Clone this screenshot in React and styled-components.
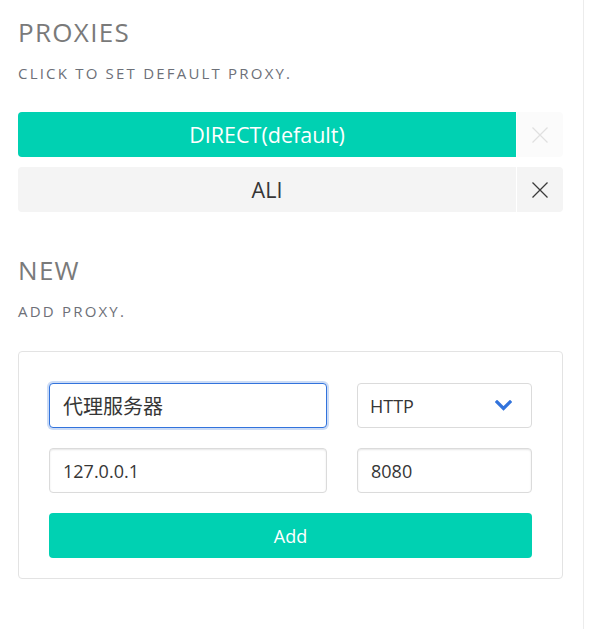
import React from "react";
import styled, { createGlobalStyle } from "styled-components";

const Global = createGlobalStyle`
  html, body { margin: 0; padding: 0; background: #fff; }
  body { font-family: "Open Sans", "Noto Sans CJK SC", sans-serif; color: #363636; }
  * { box-sizing: border-box; }
`;

const Page = styled.div`
  width: 584px;
  min-height: 100vh;
  padding: 16px 20px 0 18px;
  border-right: 1px solid #ececec;
`;

const Title = styled.h1`
  margin: 0;
  font-size: 26px;
  line-height: 32px;
  font-weight: 400;
  letter-spacing: 1.3px;
  color: #7a7a7a;
  margin-top: ${(p) => p.$top || 0}px;
`;

const Subtitle = styled.p`
  margin: 15px 0 0;
  font-size: 15px;
  line-height: 20px;
  letter-spacing: 2.2px;
  color: #6d7078;
`;

const ProxyList = styled.div`
  margin-top: 29px;
  display: flex;
  flex-direction: column;
  gap: 10px;
`;

const ProxyRow = styled.div`
  display: flex;
  gap: 1px;
  height: 45px;
`;

const ProxyButton = styled.button`
  flex: 1;
  border: none;
  border-radius: 4px 0 0 4px;
  background: ${(p) => (p.$active ? "#00d1b2" : "#f4f4f4")};
  color: ${(p) => (p.$active ? "#fff" : "#363636")};
  font-family: "Open Sans", sans-serif;
  font-size: 21.5px;
  padding: 0;
  cursor: pointer;
`;

const DeleteButton = styled.button`
  width: 46px;
  border: none;
  border-radius: 0 4px 4px 0;
  background: ${(p) => (p.$disabled ? "#fbfbfb" : "#f4f4f4")};
  color: ${(p) => (p.$disabled ? "#e0e0e0" : "#3a3a3a")};
  display: flex;
  align-items: center;
  justify-content: center;
  padding: 0;
  cursor: pointer;
`;

const Card = styled.div`
  margin-top: 30px;
  border: 1px solid #e3e3e3;
  border-radius: 4px;
  padding: 31px 30px 20px;
  display: grid;
  grid-template-columns: 1fr 175px;
  gap: 20px 30px;
`;

const Input = styled.input`
  height: 45px;
  width: 100%;
  border: 1px solid ${(p) => (p.$focused ? "#3273dc" : "#dbdbdb")};
  border-radius: 4px;
  padding: 0 13px;
  font-family: "Open Sans", "Noto Sans CJK SC", sans-serif;
  font-size: ${(p) => (p.$cjk ? 20 : 18)}px;
  color: #363636;
  outline: none;
  box-shadow: ${(p) =>
    p.$focused
      ? "0 0 0 2px rgba(50,115,220,0.25)"
      : "inset 0 1px 2px rgba(10,10,10,0.1)"};
`;

const SelectBox = styled.div`
  position: relative;
  height: 45px;
  border: 1px solid #dbdbdb;
  border-radius: 4px;
  display: flex;
  align-items: center;
  justify-content: space-between;
  padding: 0 19px 0 12px;
  font-size: 18px;
  color: #363636;
`;

const AddButton = styled.button`
  grid-column: 1 / -1;
  height: 45px;
  border: none;
  border-radius: 4px;
  background: #00d1b2;
  color: #fff;
  font-family: "Open Sans", sans-serif;
  font-size: 18px;
  cursor: pointer;
`;

const Cross = () => (
  <svg width="18" height="18" viewBox="0 0 18 18" fill="none">
    <path d="M1.5 1.5 L16.5 16.5 M16.5 1.5 L1.5 16.5" stroke="currentColor" strokeWidth="1.3" />
  </svg>
);

const Chevron = () => (
  <svg width="17" height="11" viewBox="0 0 17 11" fill="none">
    <path d="M2 2 L8.5 8.5 L15 2" stroke="#3273dc" strokeWidth="3.2" strokeLinecap="square" />
  </svg>
);

export default function App() {
  return (
    <>
      <Global />
      <Page>
        <Title>PROXIES</Title>
        <Subtitle>CLICK TO SET DEFAULT PROXY.</Subtitle>
        <ProxyList>
          <ProxyRow>
            <ProxyButton $active>DIRECT(default)</ProxyButton>
            <DeleteButton $disabled>
              <Cross />
            </DeleteButton>
          </ProxyRow>
          <ProxyRow>
            <ProxyButton>ALI</ProxyButton>
            <DeleteButton>
              <Cross />
            </DeleteButton>
          </ProxyRow>
        </ProxyList>

        <Title $top={42}>NEW</Title>
        <Subtitle>ADD PROXY.</Subtitle>
        <Card>
          <Input $focused $cjk defaultValue="代理服务器" />
          <SelectBox>
            <span>HTTP</span>
            <Chevron />
          </SelectBox>
          <Input defaultValue="127.0.0.1" />
          <Input defaultValue="8080" />
          <AddButton>Add</AddButton>
        </Card>
      </Page>
    </>
  );
}
